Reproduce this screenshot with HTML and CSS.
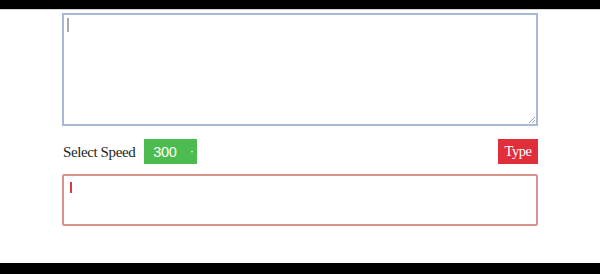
FILE: index.html
```html
<!DOCTYPE html>
<html>
<head>
<meta charset="utf-8">
<link rel="stylesheet" href="styles.css">
</head>
<body>
<div class="topbar"></div>
<main class="page">
  <div class="editor">
    <span class="caret gray"></span>
    <svg class="grip" width="6" height="6" viewBox="0 0 6 6"><path d="M6 0L0 6M6 3L3 6" stroke="#9aa6b8" stroke-width="1"/></svg>
  </div>
  <div class="controls">
    <div class="speed">
      <span class="label">Select Speed</span>
      <div class="select"><span>300</span><span class="arrow"></span></div>
    </div>
    <button class="type-btn">Type</button>
  </div>
  <div class="output">
    <span class="caret red"></span>
  </div>
</main>
<div class="bottombar"></div>
</body>
</html>
```

FILE: styles.css
```css
html, body {
  margin: 0;
  padding: 0;
  background: #fff;
  width: 600px;
  height: 274px;
  overflow: hidden;
}
body {
  display: flex;
  flex-direction: column;
  font-family: "Liberation Serif", serif;
}
.topbar {
  height: 9px;
  background: #000;
  border-bottom: 1px solid #d4d4d4;
}
.page {
  flex: 1;
  padding: 3px 0 0 62px;
  width: 476px;
  display: flex;
  flex-direction: column;
}
.editor {
  position: relative;
  box-sizing: border-box;
  height: 113px;
  border: 2px solid #a7b9d8;
  padding: 3px 0 0 3px;
}
.caret {
  display: block;
  width: 2px;
}
.caret.gray {
  height: 14px;
  background: #a9a9a9;
}
.grip {
  position: absolute;
  right: 1px;
  bottom: 1px;
}
.controls {
  margin-top: 13px;
  height: 25px;
  display: flex;
  justify-content: space-between;
  align-items: center;
}
.speed {
  display: flex;
  align-items: center;
  gap: 9px;
}
.label {
  font-size: 15px;
  letter-spacing: -0.4px;
  color: #1e1e1e;
  padding-left: 1px;
  padding-top: 1px;
}
.select {
  width: 53px;
  height: 25px;
  box-sizing: border-box;
  background: #4cbc50;
  color: #fff;
  font-family: "Liberation Sans", sans-serif;
  font-size: 14.5px;
  letter-spacing: -0.3px;
  display: flex;
  align-items: center;
  justify-content: space-between;
  padding: 0 4px 0 9px;
}
.arrow {
  width: 0;
  height: 0;
  border-left: 1.5px solid transparent;
  border-right: 1.5px solid transparent;
  border-top: 2px solid #e8f5e8;
  margin-top: 1px;
}
.type-btn {
  width: 40px;
  height: 25px;
  border: 0;
  padding: 0;
  background: #e02e3b;
  color: #fff;
  font-family: "Liberation Serif", serif;
  font-size: 14.5px;
  letter-spacing: -0.5px;
}
.output {
  margin-top: 10px;
  box-sizing: border-box;
  height: 52px;
  border: 2px solid #da938a;
  border-radius: 2px;
  padding: 6px 0 0 6px;
}
.caret.red {
  height: 11px;
  background: #e23546;
}
.bottombar {
  height: 11px;
  background: #000;
}
```
